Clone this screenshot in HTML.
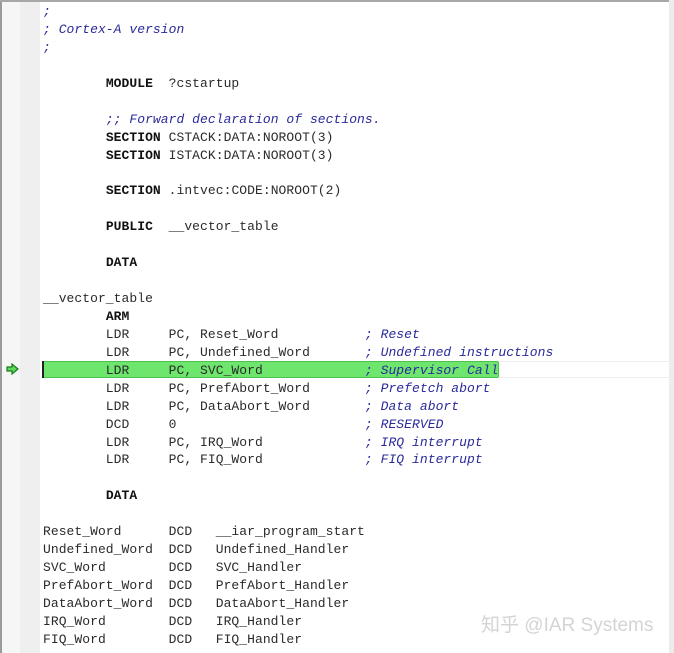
<!DOCTYPE html>
<html><head><meta charset="utf-8"><style>
html,body{margin:0;padding:0;background:#fff;width:674px;height:653px;overflow:hidden;position:relative}
.gut1{position:absolute;left:0;top:0;width:2px;height:653px;background:#9a9a9a}
.gut2{position:absolute;left:2px;top:0;width:18px;height:653px;background:#f6f6f6}
.gut3{position:absolute;left:20px;top:0;width:20px;height:653px;background:#efefef}
.top{position:absolute;left:0;top:0;width:674px;height:2px;background:#a8a8a8}
.right{position:absolute;left:669px;top:0;width:5px;height:653px;background:#ececec}
.hl{position:absolute;left:43px;top:361px;width:456px;height:17px;background:#6ee66e;border:1px solid #4cc24c;border-radius:2px;box-sizing:border-box}
.caret{position:absolute;left:42px;top:361px;width:2px;height:17px;background:#222}
.rowline{position:absolute;left:499px;top:361px;width:170px;height:17px;border-top:1px solid #eee;border-bottom:1px solid #eee;box-sizing:border-box}
pre{position:absolute;left:43px;top:3px;margin:0;font-family:"Liberation Mono",monospace;font-size:13px;line-height:17.94px;color:#2a2a2a;letter-spacing:0.05px}
b{font-weight:bold;color:#111}
i{color:#2a2a9a;font-style:italic}
.wm{position:absolute;left:481px;top:610px;font-family:"Liberation Sans","Noto Sans CJK SC",sans-serif;font-size:19px;color:#d4d4d4}
</style></head><body>
<div class="gut2"></div><div class="gut3"></div><div class="gut1"></div><div class="top"></div><div class="right"></div>
<div class="rowline"></div><div class="hl"></div><div class="caret"></div>
<svg style="position:absolute;left:6px;top:363px" width="13" height="12" viewBox="0 0 13 12"><path d="M1 4h5V1l6 5-6 5V8H1z" fill="#5fd85f" stroke="#1a7a1a" stroke-width="1.2"/></svg>
<pre><i>;</i>
<i>; Cortex-A version</i>
<i>;</i>

        <b>MODULE</b>  ?cstartup

        <i>;; Forward declaration of sections.</i>
        <b>SECTION</b> CSTACK:DATA:NOROOT(3)
        <b>SECTION</b> ISTACK:DATA:NOROOT(3)

        <b>SECTION</b> .intvec:CODE:NOROOT(2)

        <b>PUBLIC</b>  __vector_table

        <b>DATA</b>

__vector_table
        <b>ARM</b>
        LDR     PC, Reset_Word           <i>; Reset</i>
        LDR     PC, Undefined_Word       <i>; Undefined instructions</i>
        LDR     PC, SVC_Word             <i>; Supervisor Call</i>
        LDR     PC, PrefAbort_Word       <i>; Prefetch abort</i>
        LDR     PC, DataAbort_Word       <i>; Data abort</i>
        DCD     0                        <i>; RESERVED</i>
        LDR     PC, IRQ_Word             <i>; IRQ interrupt</i>
        LDR     PC, FIQ_Word             <i>; FIQ interrupt</i>

        <b>DATA</b>

Reset_Word      DCD   __iar_program_start
Undefined_Word  DCD   Undefined_Handler
SVC_Word        DCD   SVC_Handler
PrefAbort_Word  DCD   PrefAbort_Handler
DataAbort_Word  DCD   DataAbort_Handler
IRQ_Word        DCD   IRQ_Handler
FIQ_Word        DCD   FIQ_Handler</pre>
<div class="wm">知乎 @IAR Systems</div>
</body></html>
